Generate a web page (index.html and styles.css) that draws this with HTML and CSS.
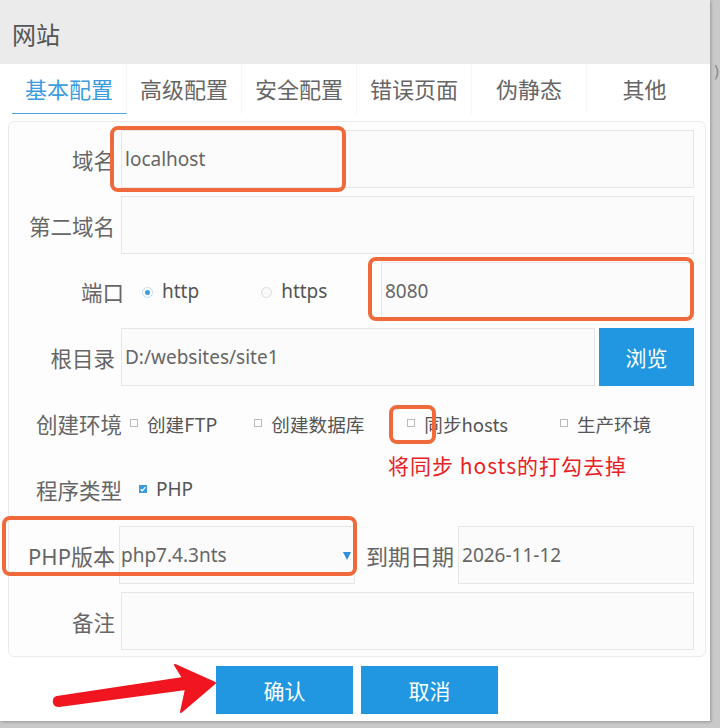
FILE: index.html
```html
<!DOCTYPE html>
<html lang="zh-CN">
<head>
<meta charset="utf-8">
<title>网站</title>
<link rel="stylesheet" href="styles.css">
</head>
<body>
<div class="backdrop-char">)</div>
<div class="dialog">
  <div class="header">网站</div>
  <div class="tabs">
    <div class="tab active">基本配置</div>
    <div class="tab">高级配置</div>
    <div class="tab">安全配置</div>
    <div class="tab">错误页面</div>
    <div class="tab">伪静态</div>
    <div class="tab last">其他</div>
  </div>
  <div class="panel">
    <div class="row">
      <div class="label">域名</div>
      <div class="input">localhost</div>
    </div>
    <div class="row">
      <div class="label">第二域名</div>
      <div class="input"></div>
    </div>
    <div class="row">
      <div class="label port-label">端口</div>
      <div class="radios">
        <span class="radio checked"></span><span class="opt">http</span>
        <span class="radio second"></span><span class="opt">https</span>
      </div>
      <div class="input port">8080</div>
    </div>
    <div class="row">
      <div class="label">根目录</div>
      <div class="input">D:/websites/site1</div>
      <div class="btn browse">浏览</div>
    </div>
    <div class="row">
      <div class="label wide">创建环境</div>
      <div class="checks">
        <span class="check"></span><span class="copt w1">创建FTP</span>
        <span class="check"></span><span class="copt w2">创建数据库</span>
        <span class="check"></span><span class="copt w3">同步hosts</span>
        <span class="check"></span><span class="copt">生产环境</span>
      </div>
    </div>
    <div class="row">
      <div class="label wide">程序类型</div>
      <div class="checks">
        <span class="check on">
          <svg viewBox="0 0 8 8" width="8" height="8"><path d="M1.6 4.2 L3.3 5.8 L6.4 2.2" fill="none" stroke="#fff" stroke-width="1.2"/></svg>
        </span><span class="copt php">PHP</span>
      </div>
    </div>
    <div class="row">
      <div class="label ver">PHP版本</div>
      <div class="input select">php7.4.3nts<span class="caret"></span></div>
      <div class="label date">到期日期</div>
      <div class="input">2026-11-12</div>
    </div>
    <div class="row">
      <div class="label">备注</div>
      <div class="input"></div>
    </div>
  </div>
  <div class="actions">
    <div class="btn action">确认</div>
    <div class="btn action">取消</div>
  </div>

  <div class="mark m1"></div>
  <div class="mark m2"></div>
  <div class="mark m3"></div>
  <div class="mark m4"></div>
  <div class="note">将同步 hosts的打勾去掉</div>
  <svg class="arrow" viewBox="0 0 240 88" width="240" height="88">
    <path d="M57 57 C52 59 53 66 59 66 L186 49 L181 72 L215 43 L175 25 L183 38 Z" fill="#f0151f" stroke="#f0151f" stroke-width="2" stroke-linejoin="round"/>
  </svg>
</div>
</body>
</html>
```
FILE: styles.css
```css
* { box-sizing: border-box; }
html, body { margin: 0; padding: 0; }
body {
  width: 720px;
  height: 728px;
  background: #c9c9c9;
  font-family: "Noto Sans", "Noto Sans CJK SC", sans-serif;
  color: #666;
  position: relative;
  overflow: hidden;
}
.backdrop-char {
  position: absolute;
  left: 714px;
  top: 60px;
  font-size: 16px;
  color: #888;
}
.dialog {
  position: relative;
  width: 710px;
  height: 721px;
  background: #fff;
  display: flex;
  flex-direction: column;
  box-shadow: 1px 1px 3px rgba(0,0,0,0.25);
}
.header {
  height: 64px;
  background: #ebebeb;
  padding-left: 12px;
  padding-top: 2px;
  font-size: 24px;
  color: #555;
  display: flex;
  align-items: center;
  font-family: "Noto Sans CJK SC", sans-serif;
}
.tabs {
  display: flex;
  height: 50px;
  margin-left: 12px;
}
.tab {
  width: 115px;
  display: flex;
  align-items: center;
  justify-content: center;
  font-size: 22px;
  color: #666;
  border-right: 1px solid #f6f6f6;
  font-family: "Noto Sans CJK SC", sans-serif;
  padding-bottom: 2px;
}
.tab.last { border-right: none; }
.tab.active {
  color: #3d9be0;
  border-bottom: 1px solid #4ea2e0;
}
.panel {
  margin: 7px 4px 0 8px;
  border: 1px solid #ebebeb;
  border-radius: 6px;
  background: #fdfdfd;
  padding: 8px 11px 6px 0;
  display: flex;
  flex-direction: column;
  gap: 8px;
}
.row {
  display: flex;
  align-items: center;
  height: 58px;
}
.label {
  width: 106px;
  margin-right: 6px;
  text-align: right;
  font-size: 21.5px;
  color: #666;
  font-family: "Noto Sans", "Noto Sans CJK SC", sans-serif;
  flex: none;
  white-space: nowrap;
}
.label.port-label { width: 115px; margin-right: 0; }
.label.wide { width: 113px; margin-right: 8px; }
.label.ver { width: 106px; margin-right: 4px; font-size: 22px; }
.label.date { width: auto; margin: 0 4px 0 11px; font-size: 22px; }
.input {
  flex: 1;
  height: 58px;
  border: 1px solid #e6e6e6;
  background: #fbfbfb;
  padding-left: 3px;
  font-size: 19px;
  color: #666;
  display: flex;
  align-items: center;
  position: relative;
}
.input.port { flex: none; width: 313px; margin-left: auto; }
.input.select { flex: none; width: 236px; padding-left: 1px; }
.caret {
  position: absolute;
  right: 3px;
  top: 25px;
  width: 0;
  height: 0;
  border-left: 4px solid transparent;
  border-right: 4px solid transparent;
  border-top: 8px solid #2f8fd8;
}
.radios, .checks {
  display: flex;
  align-items: center;
  font-size: 19px;
  color: #555;
}
.radios { margin-left: 18px; padding-top: 3px; }
.radio {
  width: 11px;
  height: 11px;
  border-radius: 50%;
  border: 1px solid #dcdcdc;
  background: #fafafa;
  margin-right: 9px;
  flex: none;
  position: relative;
}
.radio.checked { border-color: #c5dcef; background: #fff; }
.radio.checked::after {
  content: "";
  position: absolute;
  left: 2px;
  top: 2px;
  width: 5px;
  height: 5px;
  border-radius: 50%;
  background: #3d9be0;
}
.radio.second { margin-left: 62px; }
.opt { line-height: 1; padding-bottom: 2px; }
.check {
  width: 8px;
  height: 8px;
  border: 1px solid #bbb;
  background: #fff;
  margin-right: 9px;
  flex: none;
  display: block;
}
.check.on {
  border: none;
  background: #3d9be0;
  margin-left: 9px;
}
.check.on svg { display: block; }
.copt { font-family: "Noto Sans CJK SC", sans-serif; font-size: 18.6px; color: #555; }
.copt.php { font-family: "Noto Sans", sans-serif; font-size: 19px; }
.copt.w1 { margin-right: 37px; }
.copt.w2 { margin-right: 43px; }
.copt.w3 { margin-right: 52px; }
.btn {
  background: #2197e2;
  color: #fff;
  display: flex;
  align-items: center;
  justify-content: center;
  font-size: 21px;
  font-family: "Noto Sans CJK SC", sans-serif;
}
.browse { width: 95px; height: 58px; margin-left: 4px; flex: none; }
.actions {
  display: flex;
  justify-content: center;
  gap: 8px;
  margin-top: 9px;
  padding-left: 4px;
}
.action { width: 137px; height: 48px; }
.mark {
  position: absolute;
  border: 4px solid #f0693a;
  border-radius: 8px;
}
.m1 { left: 110px; top: 126px; width: 236px; height: 66px; }
.m2 { left: 368px; top: 257px; width: 326px; height: 64px; }
.m3 { left: 389px; top: 405px; width: 47px; height: 39px; }
.m4 { left: 2px; top: 516px; width: 355px; height: 60px; }
.note {
  position: absolute;
  left: 388px;
  top: 450px;
  font-size: 21px;
  letter-spacing: 1px;
  color: #e8201f;
  font-family: "Noto Sans CJK SC", sans-serif;
  white-space: nowrap;
}
.arrow {
  position: absolute;
  left: 0;
  top: 640px;
}
```
